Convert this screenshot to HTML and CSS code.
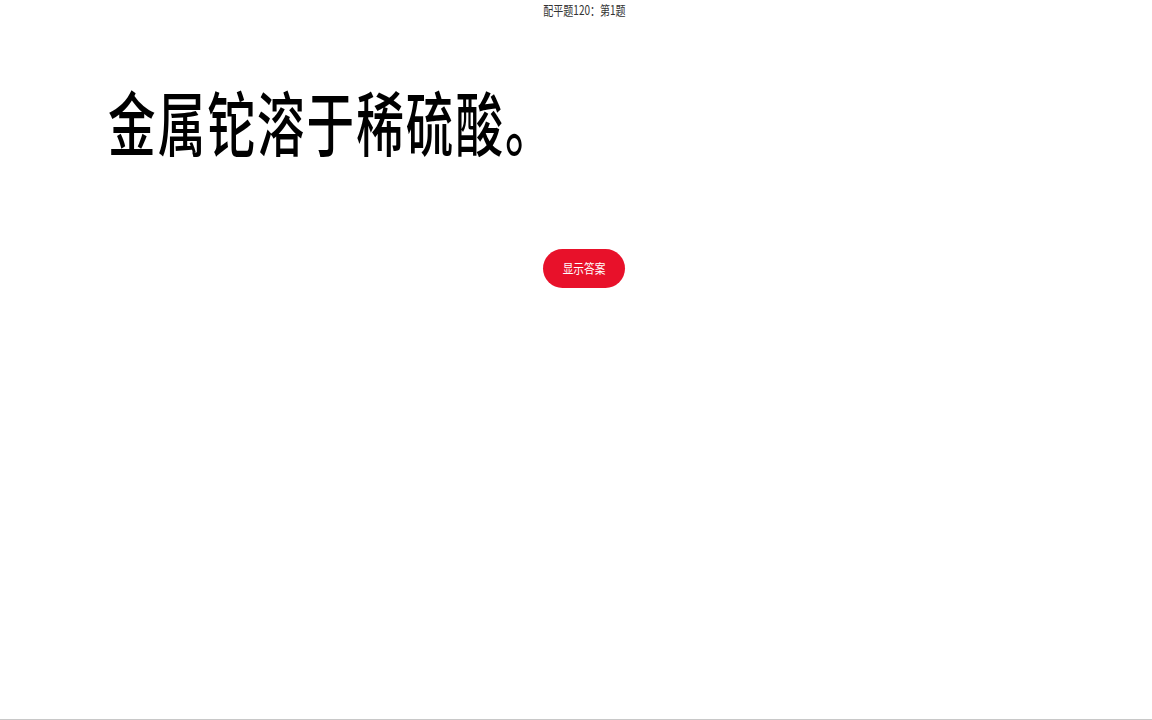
FILE: index.html
```html
<!DOCTYPE html>
<html lang="zh-CN">
<head>
<meta charset="utf-8">
<title>配平题120：第1题</title>
<link rel="stylesheet" href="styles.css">
</head>
<body>
<div class="page">
  <header class="header"><span class="title">配平题120：第1题</span></header>
  <main class="main">
    <div class="question"><span class="question-text">金属铊溶于稀硫酸。</span></div>
    <div class="actions"><button class="btn" type="button"><span class="btn-text">显示答案</span></button></div>
  </main>
</div>
</body>
</html>
```
FILE: styles.css
```css
html, body {
  margin: 0;
  padding: 0;
  background: #ffffff;
}
.page {
  height: 720px;
  box-sizing: border-box;
  border-bottom: 1px solid #c8c8c8;
  display: flex;
  flex-direction: column;
  font-family: "Noto Sans CJK SC", "Noto Sans", sans-serif;
  color: #222;
}
.header {
  height: 20px;
  padding-left: 16px;
  text-align: center;
  line-height: 16px;
  padding-bottom: 4px;
  box-sizing: border-box;
}
.title {
  display: inline-block;
  font-size: 13px;
  transform: scaleX(0.77);
  transform-origin: center;
  color: #333;
}
.main {
  display: flex;
  flex-direction: column;
}
.question {
  padding-top: 66px;
  padding-left: 108px;
  height: 70px;
}
.question-text {
  display: inline-block;
  font-size: 70px;
  font-weight: 500;
  line-height: 70px;
  letter-spacing: 3px;
  color: #000;
  white-space: nowrap;
  transform: scaleX(0.68);
  transform-origin: left center;
}
.actions {
  padding-top: 93px;
  padding-left: 16px;
  display: flex;
  justify-content: center;
}
.btn {
  width: 82px;
  height: 39px;
  border: none;
  border-radius: 20px;
  background: #e8112a;
  color: #fff;
  font-family: "Noto Sans CJK SC", sans-serif;
  font-size: 13px;
  line-height: 37px;
  padding: 0 0 2px;
  cursor: pointer;
}
.btn-text {
  display: inline-block;
  transform: scaleX(0.82);
}
```
